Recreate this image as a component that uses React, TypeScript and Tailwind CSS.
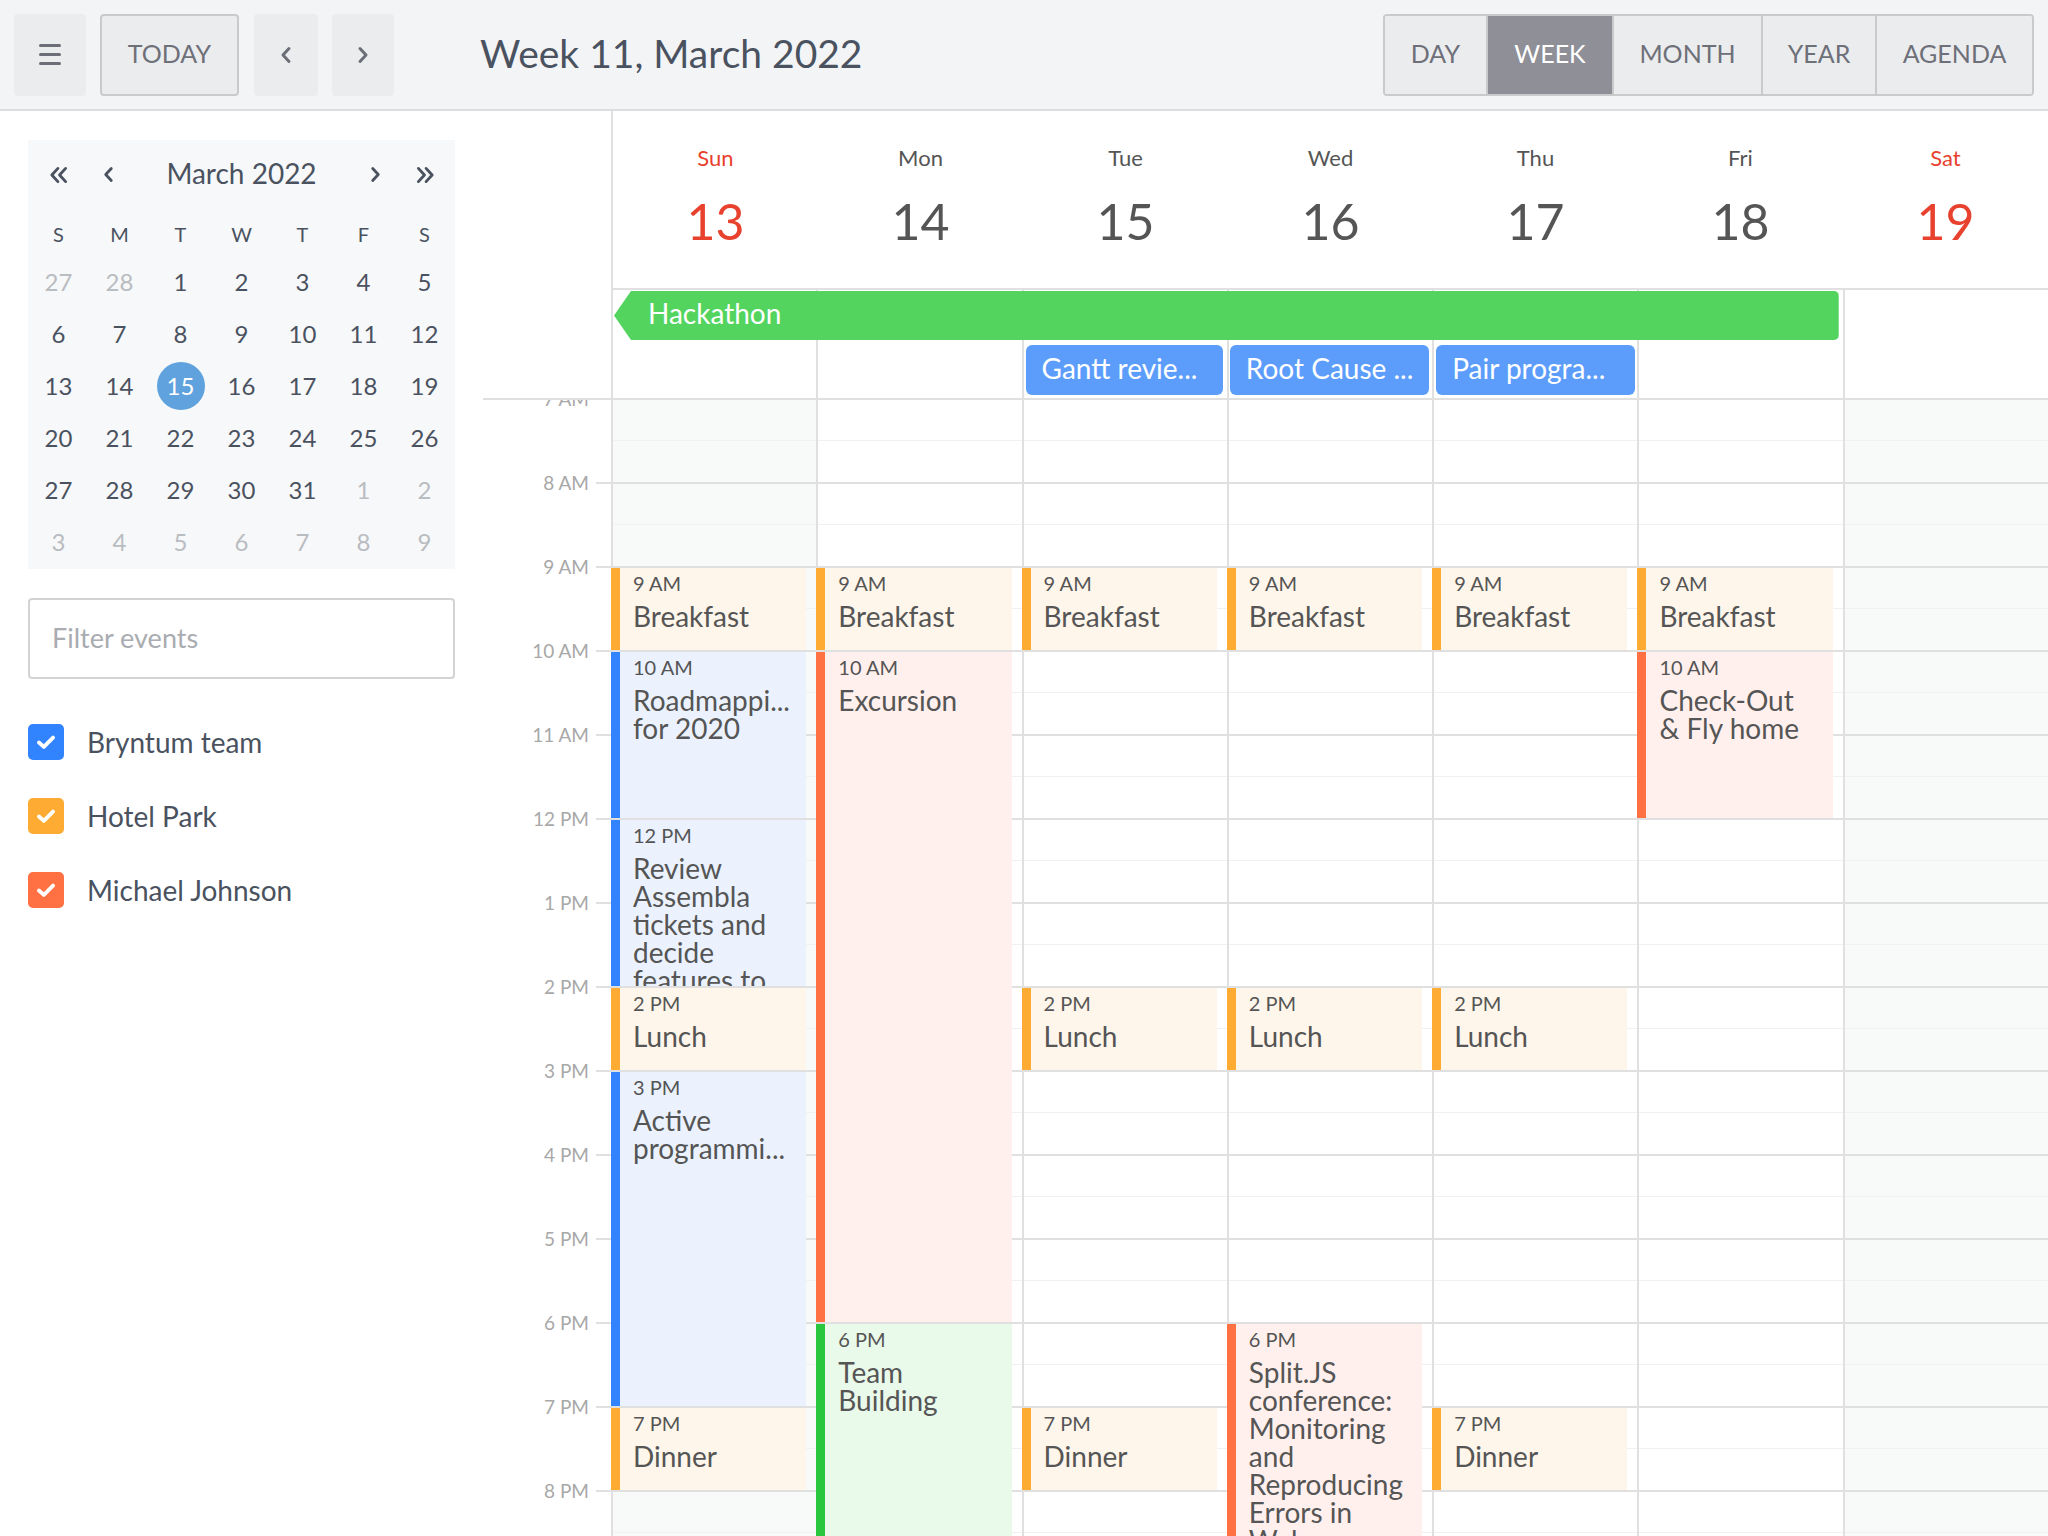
import React from 'react'

type Kind = 'orange' | 'blue' | 'red' | 'green'

type CalEvent = {
  day: number
  start: number
  end: number
  time: string
  lines: string[]
  kind: Kind
}

const HOUR = 84
const FIRST_HOUR = 7

const KIND_CLASS: Record<Kind, string> = {
  orange: 'bg-[#fff6eb] border-[#fdab33]',
  blue: 'bg-[#ebf2fe] border-[#3183fe]',
  red: 'bg-[#fff0ed] border-[#ff7043]',
  green: 'bg-[#e9f9ea] border-[#29c73e]',
}

const breakfast = (day: number): CalEvent => ({ day, start: 9, end: 10, time: '9 AM', lines: ['Breakfast'], kind: 'orange' })
const lunch = (day: number): CalEvent => ({ day, start: 14, end: 15, time: '2 PM', lines: ['Lunch'], kind: 'orange' })
const dinner = (day: number): CalEvent => ({ day, start: 19, end: 20, time: '7 PM', lines: ['Dinner'], kind: 'orange' })

const EVENTS: CalEvent[] = [
  breakfast(0),
  { day: 0, start: 10, end: 12, time: '10 AM', lines: ['Roadmappi...', 'for 2020'], kind: 'blue' },
  {
    day: 0,
    start: 12,
    end: 14,
    time: '12 PM',
    lines: ['Review', 'Assembla', 'tickets and', 'decide', 'features to', 'the backlog'],
    kind: 'blue',
  },
  lunch(0),
  { day: 0, start: 15, end: 19, time: '3 PM', lines: ['Active', 'programmi...'], kind: 'blue' },
  dinner(0),
  breakfast(1),
  { day: 1, start: 10, end: 18, time: '10 AM', lines: ['Excursion'], kind: 'red' },
  { day: 1, start: 18, end: 21, time: '6 PM', lines: ['Team', 'Building'], kind: 'green' },
  breakfast(2),
  lunch(2),
  dinner(2),
  breakfast(3),
  lunch(3),
  {
    day: 3,
    start: 18,
    end: 21,
    time: '6 PM',
    lines: ['Split.JS', 'conference:', 'Monitoring', 'and', 'Reproducing', 'Errors in', 'Web...'],
    kind: 'red',
  },
  breakfast(4),
  lunch(4),
  dinner(4),
  breakfast(5),
  { day: 5, start: 10, end: 12, time: '10 AM', lines: ['Check-Out', '& Fly home'], kind: 'red' },
]

const DAYS = [
  { name: 'Sun', date: 13, weekend: true },
  { name: 'Mon', date: 14, weekend: false },
  { name: 'Tue', date: 15, weekend: false },
  { name: 'Wed', date: 16, weekend: false },
  { name: 'Thu', date: 17, weekend: false },
  { name: 'Fri', date: 18, weekend: false },
  { name: 'Sat', date: 19, weekend: true },
]

const HOUR_LABELS = [
  '7 AM', '8 AM', '9 AM', '10 AM', '11 AM', '12 PM', '1 PM', '2 PM',
  '3 PM', '4 PM', '5 PM', '6 PM', '7 PM', '8 PM', '9 PM',
]

// mini calendar, [day, muted]
const MINI_WEEKS: [number, boolean][][] = [
  [[27, true], [28, true], [1, false], [2, false], [3, false], [4, false], [5, false]],
  [[6, false], [7, false], [8, false], [9, false], [10, false], [11, false], [12, false]],
  [[13, false], [14, false], [15, false], [16, false], [17, false], [18, false], [19, false]],
  [[20, false], [21, false], [22, false], [23, false], [24, false], [25, false], [26, false]],
  [[27, false], [28, false], [29, false], [30, false], [31, false], [1, true], [2, true]],
  [[3, true], [4, true], [5, true], [6, true], [7, true], [8, true], [9, true]],
]

const RESOURCES = [
  { name: 'Bryntum team', color: 'bg-[#3183fe]' },
  { name: 'Hotel Park', color: 'bg-[#fdab33]' },
  { name: 'Michael Johnson', color: 'bg-[#ff7043]' },
]

function Chevron({ dir, className }: { dir: 'left' | 'right'; className?: string }) {
  return (
    <svg viewBox="0 0 14 20" className={className} fill="none" stroke="currentColor" strokeWidth={3} strokeLinecap="round" strokeLinejoin="round">
      {dir === 'left' ? <polyline points="10 3.5 4 10 10 16.5" /> : <polyline points="4 3.5 10 10 4 16.5" />}
    </svg>
  )
}

function DoubleChevron({ dir }: { dir: 'left' | 'right' }) {
  return (
    <svg viewBox="0 0 20 20" className="h-[22px] w-[22px]" fill="none" stroke="currentColor" strokeWidth={2.6} strokeLinecap="round" strokeLinejoin="round">
      {dir === 'left' ? (
        <>
          <polyline points="9 4 3.5 10 9 16" />
          <polyline points="16 4 10.5 10 16 16" />
        </>
      ) : (
        <>
          <polyline points="4 4 9.5 10 4 16" />
          <polyline points="11 4 16.5 10 11 16" />
        </>
      )}
    </svg>
  )
}

function TopBar() {
  const views = [
    { label: 'DAY', w: 'w-[101px]' },
    { label: 'WEEK', w: 'w-[126px]', active: true },
    { label: 'MONTH', w: 'w-[149px]' },
    { label: 'YEAR', w: 'w-[114px]' },
    { label: 'AGENDA', w: 'w-[157px]' },
  ]
  return (
    <header className="flex h-[111px] shrink-0 items-center border-b-2 border-[#dcdddf] bg-[#f3f4f6] px-[14px]">
      <button className="flex h-[82px] w-[72px] flex-col items-center justify-center gap-[6px] rounded-[4px] bg-[#ebecee]">
        <span className="h-[3px] w-[22px] rounded-full bg-[#6b6e77]" />
        <span className="h-[3px] w-[22px] rounded-full bg-[#6b6e77]" />
        <span className="h-[3px] w-[22px] rounded-full bg-[#6b6e77]" />
      </button>
      <button className="ml-[14px] flex h-[82px] w-[139px] items-center justify-center rounded-[4px] border-2 border-[#c9cacc] bg-[#ebecee] pb-[2px] text-[25px] text-[#6e7079]">
        TODAY
      </button>
      <button className="ml-[15px] flex h-[82px] w-[64px] items-center justify-center rounded-[4px] bg-[#ebecee] text-[#6b6e77]">
        <Chevron dir="left" className="h-[20px] w-[14px]" />
      </button>
      <button className="ml-[14px] flex h-[82px] w-[62px] items-center justify-center rounded-[4px] bg-[#ebecee] text-[#6b6e77]">
        <Chevron dir="right" className="h-[20px] w-[14px]" />
      </button>
      <h1 className="ml-[86px] pb-[2px] text-[39px] text-[#4a5260]">Week 11, March 2022</h1>
      <div className="ml-auto flex h-[82px] overflow-hidden rounded-[4px] border-2 border-[#c9cacc]">
        {views.map((v, i) => (
          <button
            key={v.label}
            className={`${v.w} flex items-center justify-center pb-[2px] text-[25px] ${i > 0 ? 'border-l-2 border-[#c9cacc]' : ''} ${
              v.active ? 'bg-[#8e8f97] text-white' : 'bg-[#ebecee] text-[#6e7079]'
            }`}
          >
            {v.label}
          </button>
        ))}
      </div>
    </header>
  )
}

function MiniCalendar() {
  return (
    <div className="bg-[#f7f8fa] pb-[1px] text-[#4a5260]">
      <div className="flex h-[64px] items-center">
        <span className="flex w-[60px] justify-center pl-[2px] pt-[5px]"><DoubleChevron dir="left" /></span>
        <span className="flex w-[40px] justify-center pt-[5px]"><Chevron dir="left" className="h-[19px] w-[13px]" /></span>
        <span className="flex-1 pt-[2px] text-center text-[28px]">March 2022</span>
        <span className="flex w-[40px] justify-center pt-[5px]"><Chevron dir="right" className="h-[19px] w-[13px]" /></span>
        <span className="flex w-[60px] justify-center pt-[5px]"><DoubleChevron dir="right" /></span>
      </div>
      <div className="grid h-[52px] grid-cols-7 items-center pt-[8px] text-[20px]">
        {['S', 'M', 'T', 'W', 'T', 'F', 'S'].map((d, i) => (
          <span key={i} className="text-center">{d}</span>
        ))}
      </div>
      {MINI_WEEKS.map((week, wi) => (
        <div key={wi} className="grid h-[52px] grid-cols-7 items-center text-[24px]">
          {week.map(([d, muted], di) => (
            <span key={di} className="flex justify-center">
              {d === 15 && !muted ? (
                <span className="flex h-[48px] w-[48px] items-center justify-center rounded-full bg-[#5fa2dd] text-white">{d}</span>
              ) : (
                <span className={muted ? 'text-[#b9bcc0]' : ''}>{d}</span>
              )}
            </span>
          ))}
        </div>
      ))}
    </div>
  )
}

function Sidebar() {
  return (
    <aside className="w-[483px] shrink-0 px-[28px] pt-[29px]">
      <MiniCalendar />
      <input
        placeholder="Filter events"
        className="mt-[29px] h-[81px] w-full rounded-[4px] border-2 border-[#d2d3d5] bg-white px-[22px] pb-[3px] text-[27px] text-[#4a5260] outline-none placeholder:text-[#a9acb1]"
      />
      <div className="mt-[45px] flex flex-col gap-[38px]">
        {RESOURCES.map((r) => (
          <label key={r.name} className="flex h-[36px] items-center">
            <span className={`flex h-[36px] w-[36px] items-center justify-center rounded-[5px] ${r.color}`}>
              <svg viewBox="0 0 24 24" className="h-[26px] w-[26px]" fill="none" stroke="white" strokeWidth={3.6} strokeLinecap="round" strokeLinejoin="round">
                <polyline points="5.5 12.5 10 16.5 18.5 8" />
              </svg>
            </span>
            <span className="ml-[23px] text-[28px] leading-[36px] text-[#4a5260]">{r.name}</span>
          </label>
        ))}
      </div>
    </aside>
  )
}

function EventBlock({ ev }: { ev: CalEvent }) {
  return (
    <div
      className={`absolute left-[-2px] right-[10px] overflow-hidden border-l-[9px] pl-[13px] pt-[3px] text-[#555555] ${KIND_CLASS[ev.kind]}`}
      style={{ top: (ev.start - FIRST_HOUR) * HOUR, height: (ev.end - ev.start) * HOUR - 2 }}
    >
      <div className="text-[20px] leading-[24px]">{ev.time}</div>
      <div className="mt-[7px] text-[28px] leading-[28px]">
        {ev.lines.map((l, i) => (
          <div key={i} className="whitespace-nowrap">{l}</div>
        ))}
      </div>
    </div>
  )
}

function HourRows() {
  return (
    <>
      {HOUR_LABELS.map((_, k) => (
        <div key={k} className={k === 0 ? 'h-[82px]' : 'h-[84px] border-t-2 border-[#e0e0e0]'}>
          <div className="h-1/2 border-b border-[#f1f1f1]" />
        </div>
      ))}
    </>
  )
}

function WeekView() {
  return (
    <div className="flex min-w-0 flex-1 flex-col">
      {/* day header */}
      <div className="flex h-[179px] shrink-0">
        <div className="w-[128px] shrink-0" />
        <div className="grid flex-1 grid-cols-7 border-b-2 border-l-2 border-[#e0e0e0] pt-[33px]">
          {DAYS.map((d) => (
            <div key={d.name} className={`flex flex-col items-center ${d.weekend ? 'text-[#e8412e]' : 'text-[#555555]'}`}>
              <span className="text-[22px] leading-[28px]">{d.name}</span>
              <span className="mt-[19px] text-[50px] leading-[60px]">{d.date}</span>
            </div>
          ))}
        </div>
      </div>

      {/* all day row */}
      <div className="flex h-[108px] shrink-0">
        <div className="w-[128px] shrink-0" />
        <div className="relative flex-1">
          <div className="absolute inset-0 grid grid-cols-7">
            {DAYS.map((d) => (
              <div key={d.name} className="border-l-2 border-[#e0e0e0]" />
            ))}
          </div>
          <div className="relative grid grid-cols-7 grid-rows-[49px_50px] gap-y-[5px] pt-[1px] text-[28px] text-white">
            <div className="col-span-6 col-start-1 row-start-1 ml-[3px] mr-[4px] flex items-center rounded-r-[5px] bg-[#53d45f] pb-[5px] pl-[34px] [clip-path:polygon(17px_0,100%_0,100%_100%,17px_100%,0_50%)]">
              Hackathon
            </div>
            <div className="col-start-3 row-start-2 mx-[4px] flex items-center overflow-hidden whitespace-nowrap rounded-[6px] bg-[#5c9dfc] pb-[5px] pl-[16px]">
              Gantt revie...
            </div>
            <div className="col-start-4 row-start-2 mx-[3px] flex items-center overflow-hidden whitespace-nowrap rounded-[6px] bg-[#5c9dfc] pb-[5px] pl-[16px]">
              Root Cause ...
            </div>
            <div className="col-start-5 row-start-2 ml-[4px] mr-[2px] flex items-center overflow-hidden whitespace-nowrap rounded-[6px] bg-[#5c9dfc] pb-[5px] pl-[16px]">
              Pair progra...
            </div>
          </div>
        </div>
      </div>

      {/* time grid */}
      <div className="flex min-h-0 flex-1 items-start overflow-hidden border-t-2 border-[#e0e0e0]">
        <div className="w-[128px] shrink-0">
          {HOUR_LABELS.map((label, k) => (
            <div key={label} className={`relative ${k === 0 ? 'h-[82px]' : 'h-[84px]'}`}>
              {k > 0 && <div className="absolute right-0 top-0 h-[2px] w-[15px] bg-[#e0e0e0]" />}
              <span
                className={`absolute right-[22px] -translate-y-1/2 text-[19px] leading-none text-[#a8a8a8] ${k === 0 ? 'top-[-2px]' : 'top-0'}`}
              >
                {label}
              </span>
            </div>
          ))}
        </div>
        <div className="grid flex-1 grid-cols-7">
          {DAYS.map((d, i) => (
            <div key={d.name} className={`relative border-l-2 border-[#e0e0e0] ${d.weekend ? 'bg-[#f8f9f9]' : 'bg-white'}`}>
              <HourRows />
              {EVENTS.filter((e) => e.day === i).map((e, j) => (
                <EventBlock key={j} ev={e} />
              ))}
            </div>
          ))}
        </div>
      </div>
    </div>
  )
}

export default function App() {
  return (
    <div className="flex h-screen flex-col overflow-hidden bg-white font-['Lato','Noto_Sans',sans-serif]">
      <TopBar />
      <div className="flex min-h-0 flex-1">
        <Sidebar />
        <WeekView />
      </div>
    </div>
  )
}
